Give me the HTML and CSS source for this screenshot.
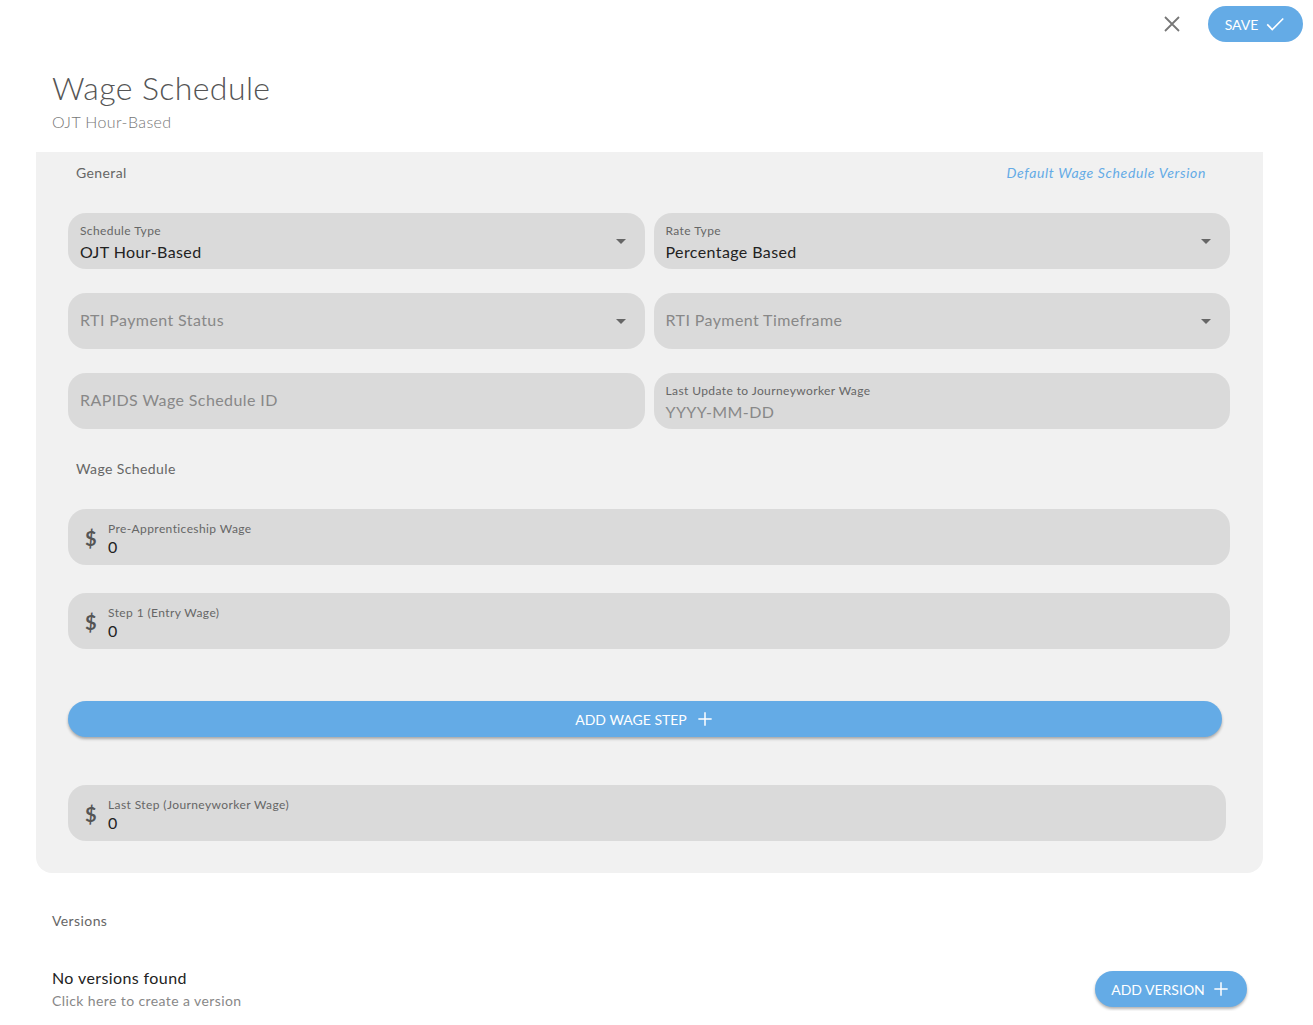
FILE: index.html
```html
<!DOCTYPE html>
<html lang="en">
<head>
  <meta charset="UTF-8" />
  <title>Wage Schedule</title>
  <link rel="stylesheet" href="styles.css">
</head>
<body>
  <div class="topbar">
    <button class="icon-btn" aria-label="Close">
      <svg width="24" height="24" viewBox="0 0 24 24"><path d="M5 5 19 19M19 5 5 19" stroke="#777" stroke-width="1.8" fill="none"/></svg>
    </button>
    <button class="pill-btn save-btn">SAVE
      <svg width="22" height="22" viewBox="0 0 24 24"><path d="M3.5 12.5 9 18 21 6" stroke="#fff" stroke-width="1.8" fill="none"/></svg>
    </button>
  </div>

  <div class="heading">
    <h1>Wage Schedule</h1>
    <div class="subtitle">OJT Hour-Based</div>
  </div>

  <div class="panel">
    <div class="section-head">
      <span class="section-label">General</span>
      <a class="default-link">Default Wage Schedule Version</a>
    </div>

    <div class="field-grid">
      <div class="field select">
        <div class="field-text">
          <div class="label">Schedule Type</div>
          <div class="value">OJT Hour-Based</div>
        </div>
        <span class="caret"></span>
      </div>
      <div class="field select">
        <div class="field-text">
          <div class="label">Rate Type</div>
          <div class="value">Percentage Based</div>
        </div>
        <span class="caret"></span>
      </div>
      <div class="field select">
        <div class="field-text">
          <div class="placeholder">RTI Payment Status</div>
        </div>
        <span class="caret"></span>
      </div>
      <div class="field select">
        <div class="field-text">
          <div class="placeholder">RTI Payment Timeframe</div>
        </div>
        <span class="caret"></span>
      </div>
      <div class="field">
        <div class="field-text">
          <div class="placeholder">RAPIDS Wage Schedule ID</div>
        </div>
      </div>
      <div class="field">
        <div class="field-text">
          <div class="label">Last Update to Journeyworker Wage</div>
          <div class="value muted">YYYY-MM-DD</div>
        </div>
      </div>
    </div>

    <div class="section-label wage-label">Wage Schedule</div>

    <div class="wage-list">
      <div class="field money">
        <span class="dollar">$</span>
        <div class="field-text">
          <div class="label">Pre-Apprenticeship Wage</div>
          <div class="value">0</div>
        </div>
      </div>
      <div class="field money">
        <span class="dollar">$</span>
        <div class="field-text">
          <div class="label">Step 1 (Entry Wage)</div>
          <div class="value">0</div>
        </div>
      </div>
    </div>

    <button class="pill-btn add-step">ADD WAGE STEP
      <svg width="20" height="20" viewBox="0 0 24 24"><path d="M12 4v16M4 12h16" stroke="#fff" stroke-width="1.8" fill="none"/></svg>
    </button>

    <div class="field money last-step">
      <span class="dollar">$</span>
      <div class="field-text">
        <div class="label">Last Step (Journeyworker Wage)</div>
        <div class="value">0</div>
      </div>
    </div>
  </div>

  <div class="versions">
    <div class="section-label">Versions</div>
    <div class="versions-row">
      <div>
        <div class="empty-title">No versions found</div>
        <div class="empty-sub">Click here to create a version</div>
      </div>
      <button class="pill-btn add-version">ADD VERSION
        <svg width="20" height="20" viewBox="0 0 24 24"><path d="M12 4v16M4 12h16" stroke="#fff" stroke-width="1.8" fill="none"/></svg>
      </button>
    </div>
  </div>
</body>
</html>
```

FILE: styles.css
```css
body {
  margin: 0;
  font-family: 'Lato', 'Open Sans', sans-serif;
  letter-spacing: 0.4px;
  background: #fff;
  color: #222;
  width: 1313px;
}

button {
  font-family: inherit;
  letter-spacing: 0;
  border: none;
  cursor: pointer;
}

.topbar {
  display: flex;
  justify-content: flex-end;
  align-items: center;
  gap: 24px;
  padding: 6px 10px 0 0;
  height: 36px;
}

.icon-btn {
  background: none;
  padding: 0;
  width: 24px;
  height: 24px;
}

.pill-btn {
  display: flex;
  align-items: center;
  justify-content: center;
  gap: 8px;
  height: 36px;
  border-radius: 18px;
  background: #64abe6;
  color: #fff;
  font-size: 14px;
}

.save-btn {
  width: 95px;
  padding: 0;
  gap: 6px;
}

.heading {
  padding: 28px 0 0 52px;
  height: 82px;
}

.heading h1 {
  margin: 0;
  font-size: 32px;
  font-weight: 300;
  color: #555;
  line-height: 36px;
}

.subtitle {
  margin-top: 6px;
  font-size: 16px;
  font-weight: 300;
  color: #777;
}

.panel {
  margin: 0 50px 0 36px;
  background: #f1f1f1;
  border-radius: 0 0 16px 16px;
  padding: 10px 33px 32px 32px;
}

.section-head {
  display: flex;
  justify-content: space-between;
  align-items: center;
  height: 20px;
  padding: 0 24px 0 8px;
  margin-bottom: 31px;
}

.section-label {
  font-size: 14px;
  color: #666;
}

.default-link {
  font-size: 14px;
  font-style: italic;
  letter-spacing: 0.65px;
  color: #64abe6;
}

.field-grid {
  display: grid;
  grid-template-columns: 1fr 1fr;
  column-gap: 9px;
  row-gap: 24px;
}

.field {
  display: flex;
  align-items: center;
  height: 56px;
  background: #dadada;
  border-radius: 18px;
  padding: 0 12px;
  box-sizing: border-box;
}

.field-text {
  flex: 1;
}

.label {
  padding-top: 4px;
  font-size: 12px;
  color: #666;
  line-height: 14px;
}

.value {
  margin-top: 4px;
  font-size: 16px;
  color: #222;
  line-height: 20px;
}

.value.muted {
  color: #888;
}

.placeholder {
  font-size: 16px;
  line-height: 22px;
  margin-bottom: 2px;
  color: #888;
}

.caret {
  width: 0;
  height: 0;
  border-left: 5px solid transparent;
  border-right: 5px solid transparent;
  border-top: 5px solid #666;
  margin-right: 7px;
}

.wage-label {
  padding-left: 8px;
  margin: 32px 0 32px;
  line-height: 16px;
}

.wage-list {
  display: flex;
  flex-direction: column;
  gap: 28px;
}

.money .dollar {
  font-size: 20px;
  font-weight: bold;
  color: #555;
  width: 23px;
  padding: 2px 0 0 5px;
}

.money .value {
  margin-top: 1px;
}

.add-step {
  width: 1154px;
  margin: 52px 0 48px;
  box-shadow: 0 2px 3px rgba(0, 0, 0, 0.3);
}

.last-step {
  margin-right: 4px;
}

.versions {
  padding: 39px 66px 0 52px;
}

.versions-row {
  display: flex;
  justify-content: space-between;
  align-items: center;
  margin-top: 38px;
}

.empty-title {
  font-size: 16px;
  color: #222;
  line-height: 22px;
}

.empty-sub {
  margin-top: 2px;
  font-size: 14px;
  color: #888;
  line-height: 20px;
}

.add-version {
  width: 152px;
  gap: 6px;
  box-shadow: 0 2px 3px rgba(0, 0, 0, 0.3);
}
```
